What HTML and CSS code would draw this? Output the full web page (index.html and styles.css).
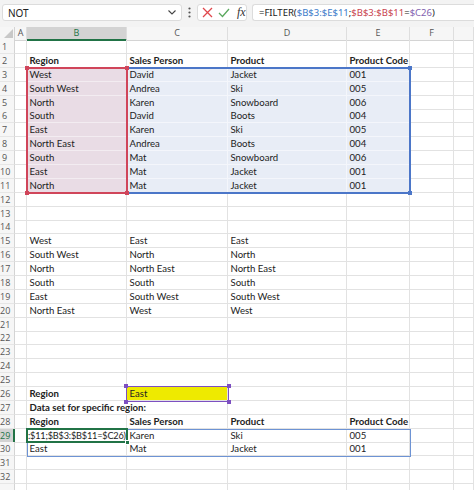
FILE: index.html
```html
<!DOCTYPE html>
<html>
<head>
<meta charset="utf-8">
<link rel="stylesheet" href="styles.css">
</head>
<body>
<div class="toolbar">
  <div class="namebox"><span>NOT</span>
    <svg class="chev" width="8" height="5" viewBox="0 0 8 5"><polyline points="0.5,0.5 4,4 7.5,0.5" fill="none" stroke="#444" stroke-width="1.1"/></svg>
  </div>
  <div class="sep"><svg width="3" height="11" viewBox="0 0 3 11"><circle cx="1.5" cy="1.5" r="1.1" fill="#555"/><circle cx="1.5" cy="5.5" r="1.1" fill="#555"/><circle cx="1.5" cy="9.5" r="1.1" fill="#555"/></svg></div>
  <div class="btns">
    <svg width="11" height="11" viewBox="0 0 11 11"><path d="M1 1 L10 10 M10 1 L1 10" stroke="#e0474c" stroke-width="1.3" fill="none"/></svg>
    <svg width="12" height="10" viewBox="0 0 12 10"><path d="M1 5 L4.5 8.5 L11 1" stroke="#5aa85e" stroke-width="1.3" fill="none"/></svg>
    <span class="fx">fx</span>
  </div>
  <div class="formula">=FILTER(<span class="rb">$B$3:$E$11</span>;<span class="rr">$B$3:$B$11</span>=<span class="rp">$C26</span>)</div>
</div>

<div class="sheet">
  <div class="hdr">
    <span class="corner"><svg width="9" height="9" viewBox="0 0 9 9"><polygon points="9,0 9,9 0,9" fill="#c8c8c8"/></svg></span>
    <span>A</span><span class="sel">B</span><span>C</span><span>D</span><span>E</span><span>F</span><span></span>
  </div>
  <div class="row"><span class="rh">1</span><span></span><span></span><span></span><span></span><span></span><span></span><span></span></div>
  <div class="row"><span class="rh">2</span><span></span><span class="b">Region</span><span class="b">Sales Person</span><span class="b">Product</span><span class="b">Product Code</span><span></span><span></span></div>
  <div class="row"><span class="rh">3</span><span></span><span class="pk">West</span><span class="bl">David</span><span class="bl">Jacket</span><span class="bl">001</span><span></span><span></span></div>
  <div class="row"><span class="rh">4</span><span></span><span class="pk">South West</span><span class="bl">Andrea</span><span class="bl">Ski</span><span class="bl">005</span><span></span><span></span></div>
  <div class="row"><span class="rh">5</span><span></span><span class="pk">North</span><span class="bl">Karen</span><span class="bl">Snowboard</span><span class="bl">006</span><span></span><span></span></div>
  <div class="row"><span class="rh">6</span><span></span><span class="pk">South</span><span class="bl">David</span><span class="bl">Boots</span><span class="bl">004</span><span></span><span></span></div>
  <div class="row"><span class="rh">7</span><span></span><span class="pk">East</span><span class="bl">Karen</span><span class="bl">Ski</span><span class="bl">005</span><span></span><span></span></div>
  <div class="row"><span class="rh">8</span><span></span><span class="pk">North East</span><span class="bl">Andrea</span><span class="bl">Boots</span><span class="bl">004</span><span></span><span></span></div>
  <div class="row"><span class="rh">9</span><span></span><span class="pk">South</span><span class="bl">Mat</span><span class="bl">Snowboard</span><span class="bl">006</span><span></span><span></span></div>
  <div class="row"><span class="rh">10</span><span></span><span class="pk">East</span><span class="bl">Mat</span><span class="bl">Jacket</span><span class="bl">001</span><span></span><span></span></div>
  <div class="row"><span class="rh">11</span><span></span><span class="pk">North</span><span class="bl">Mat</span><span class="bl">Jacket</span><span class="bl">001</span><span></span><span></span></div>
  <div class="row"><span class="rh">12</span><span></span><span></span><span></span><span></span><span></span><span></span><span></span></div>
  <div class="row"><span class="rh">13</span><span></span><span></span><span></span><span></span><span></span><span></span><span></span></div>
  <div class="row"><span class="rh">14</span><span></span><span></span><span></span><span></span><span></span><span></span><span></span></div>
  <div class="row"><span class="rh">15</span><span></span><span>West</span><span>East</span><span>East</span><span></span><span></span><span></span></div>
  <div class="row"><span class="rh">16</span><span></span><span>South West</span><span>North</span><span>North</span><span></span><span></span><span></span></div>
  <div class="row"><span class="rh">17</span><span></span><span>North</span><span>North East</span><span>North East</span><span></span><span></span><span></span></div>
  <div class="row"><span class="rh">18</span><span></span><span>South</span><span>South</span><span>South</span><span></span><span></span><span></span></div>
  <div class="row"><span class="rh">19</span><span></span><span>East</span><span>South West</span><span>South West</span><span></span><span></span><span></span></div>
  <div class="row"><span class="rh">20</span><span></span><span>North East</span><span>West</span><span>West</span><span></span><span></span><span></span></div>
  <div class="row"><span class="rh">21</span><span></span><span></span><span></span><span></span><span></span><span></span><span></span></div>
  <div class="row"><span class="rh">22</span><span></span><span></span><span></span><span></span><span></span><span></span><span></span></div>
  <div class="row"><span class="rh">23</span><span></span><span></span><span></span><span></span><span></span><span></span><span></span></div>
  <div class="row"><span class="rh">24</span><span></span><span></span><span></span><span></span><span></span><span></span><span></span></div>
  <div class="row"><span class="rh">25</span><span></span><span></span><span></span><span></span><span></span><span></span><span></span></div>
  <div class="row"><span class="rh">26</span><span></span><span class="b">Region</span><span class="yl">East</span><span></span><span></span><span></span><span></span></div>
  <div class="row"><span class="rh">27</span><span></span><span class="b sp2">Data set for specific region:</span><span></span><span></span><span></span><span></span></div>
  <div class="row"><span class="rh">28</span><span></span><span class="b">Region</span><span class="b">Sales Person</span><span class="b">Product</span><span class="b">Product Code</span><span></span><span></span></div>
  <div class="row"><span class="rh sel">29</span><span></span><span class="edit">:$11;$B$3:$B$11=$C26)</span><span>Karen</span><span>Ski</span><span>005</span><span></span><span></span></div>
  <div class="row"><span class="rh">30</span><span></span><span>East</span><span>Mat</span><span>Jacket</span><span>001</span><span></span><span></span></div>
  <div class="row"><span class="rh">31</span><span></span><span></span><span></span><span></span><span></span><span></span><span></span></div>
  <div class="row"><span class="rh">32</span><span></span><span></span><span></span><span></span><span></span><span></span><span></span></div>
  <div class="row"><span class="rh"></span><span></span><span></span><span></span><span></span><span></span><span></span><span></span></div>

  <div class="ref ref-blue"><i class="h tl"></i><i class="h tr"></i><i class="h bl"></i><i class="h br"></i></div>
  <div class="ref ref-red"><i class="h tl"></i><i class="h tr"></i><i class="h bl"></i><i class="h br"></i></div>
  <div class="ref ref-purple"><i class="h tl"></i><i class="h tr"></i><i class="h bl"></i><i class="h br"></i></div>
  <div class="spill"></div>
  <div class="active"><i class="fill"></i></div>
</div>
</body>
</html>
```

FILE: styles.css
```css
* { box-sizing: border-box; margin: 0; padding: 0; }
html, body { width: 474px; height: 490px; overflow: hidden; background: #fff; }
body { font-family: Lato, "Liberation Sans", sans-serif; color: #222; }

.toolbar {
  display: flex;
  align-items: flex-start;
  height: 27px;
  padding: 4px 0 0 2px;
  background: #f3f3f3;
  font-family: "Noto Sans", "Open Sans", sans-serif;
}
.namebox {
  width: 180px; height: 17px;
  background: #fff;
  border: 1px solid #dcdcdc;
  border-radius: 3px;
  display: flex; align-items: center; justify-content: space-between;
  padding: 0 4px 0 5px;
  font-size: 10px; color: #222;
}
.chev { margin-right: 1px; }
.sep { width: 15px; height: 17px; display: flex; align-items: center; justify-content: center; }
.btns {
  width: 50px; height: 17px;
  background: #fff;
  border: 1px solid #dcdcdc;
  border-radius: 3px;
  display: flex; align-items: center; gap: 5px;
  padding-left: 4px;
}
.fx { font-family: "Liberation Serif", serif; font-style: italic; font-size: 12px; color: #333; margin-left: 2px; }
.formula {
  flex: 1;
  margin-left: 5px;
  height: 17px;
  background: #fff;
  border: 1px solid #dcdcdc;
  border-right: none;
  border-radius: 3px 0 0 3px;
  padding-left: 6px;
  font-size: 9.5px; line-height: 15px;
  color: #222;
  white-space: nowrap;
}
.rb { color: #3b7ac9; }
.rr { color: #c8434f; }
.rp { color: #8262b0; }

.sheet { position: relative; }
.hdr, .row {
  display: grid;
  grid-template-columns: 15px 12px 100px 101px 119px 63px 44px 20px;
}
.hdr { height: 13px; background: #f6f6f6; }
.hdr > span {
  border-right: 1px solid #dedede;
  border-bottom: 1px solid #d4d4d4;
  font-family: "Open Sans", sans-serif;
  font-size: 9px; color: #555;
  text-align: center; line-height: 12px;
}
.hdr > .corner { display: flex; align-items: flex-end; padding: 0 1px 2px 4px; border-right-color: #d4d4d4; }
.hdr > .sel { background: #d3d3d3; color: #217346; border-bottom: 2px solid #217346; }

.row { height: 13.88px; }
.row > span {
  border-right: 1px solid #e2e2e2;
  border-bottom: 1px solid #e2e2e2;
  padding-left: 2.5px;
  font-size: 9.6px; line-height: 13.5px;
  white-space: nowrap; overflow: hidden;
  color: #222;
}
.row > .rh {
  background: #f6f6f6;
  border-right-color: #d4d4d4;
  border-bottom-color: #e6e6e6;
  font-family: "Open Sans", sans-serif;
  font-size: 9px; color: #555;
  padding: 0 5px 0 0;
  text-align: center; line-height: 13px;
  overflow: visible;
}
.row > .rh.sel { background: #d3d3d3; color: #217346; border-right: 2px solid #217346; }
.row > .b { font-weight: 700; overflow: visible; }
.row > .pk { background: #e9dce5; border-color: #f3ecf1; }
.row > .bl { background: #e8edf6; border-color: #f4f6fb; }
.row > .yl { background: #eeea00; }
.row > .sp2 { grid-column: span 2; }
.row > .edit { padding-left: 1px; font-size: 9.2px; letter-spacing: -0.2px; }

.ref { position: absolute; border: 2px solid; }
.ref-blue { left: 26px; top: 39.8px; width: 385px; height: 126.9px; border-color: #4b76c8; }
.ref-red { left: 26px; top: 39.8px; width: 102px; height: 126.9px; border-color: #d0455a; }
.ref-purple { left: 126px; top: 359px; width: 103px; height: 15.9px; border-width: 1.5px; border-color: #7c4fc1; }
.h { position: absolute; width: 4px; height: 4px; }
.ref-blue .h { background: #4b76c8; }
.ref-red .h { background: #d0455a; }
.ref-purple .h { background: #7c4fc1; }
.tl { left: -3px; top: -3px; }
.tr { right: -3px; top: -3px; }
.bl { left: -3px; bottom: -3px; }
.br { right: -3px; bottom: -3px; }
.row > .bl { position: static; width: auto; height: auto; }

.spill { position: absolute; left: 27px; top: 401.6px; width: 384px; height: 28.8px; border: 1px solid #6d93d4; }
.active { position: absolute; left: 26px; top: 400.6px; width: 102px; height: 15.9px; border: 2px solid #217346; }
.fill { position: absolute; right: -3.5px; bottom: -3.5px; width: 5px; height: 5px; background: #217346; border: 1px solid #fff; }
```
